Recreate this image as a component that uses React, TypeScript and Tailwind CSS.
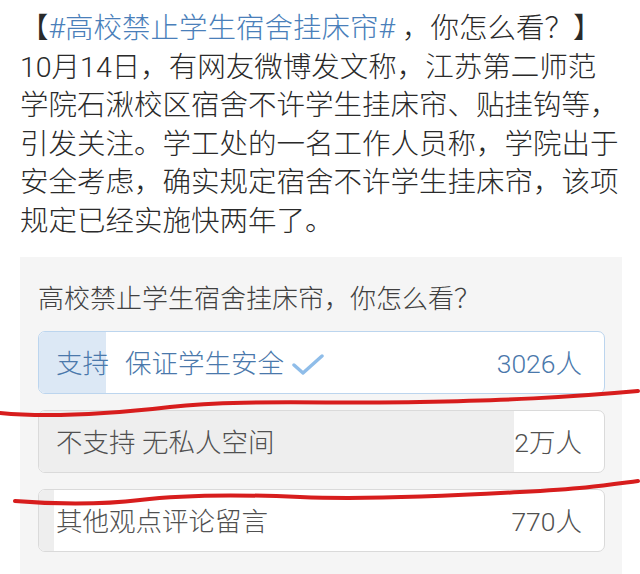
import React from "react";

type Option = {
  label: React.ReactNode;
  count: string;
  fill: number; // px width of the filled part
  selected?: boolean;
};

const options: Option[] = [
  {
    label: (
      <>
        <span>支持</span>
        <span className="ml-[16px]">保证学生安全</span>
        <svg width="32" height="22" viewBox="0 0 32 22" className="ml-[8px] mt-[2px]">
          <path d="M2 11 L11 19 L30 2" fill="none" stroke="#8fbde9" strokeWidth="3.4" strokeLinecap="round" strokeLinejoin="round" />
        </svg>
      </>
    ),
    count: "3026人",
    fill: 67,
    selected: true,
  },
  { label: "不支持 无私人空间", count: "2万人", fill: 475 },
  { label: "其他观点评论留言", count: "770人", fill: 15 },
];

function PollRow({ option }: { option: Option }) {
  const selected = option.selected;
  return (
    <div
      className={`relative h-[63px] rounded-[7px] border bg-white overflow-hidden ${
        selected ? "border-[#bcd5ee]" : "border-[#dadada]"
      }`}
    >
      {/* filled share of votes */}
      <div
        className={`absolute left-0 top-0 bottom-0 ${selected ? "bg-[#dce8f5]" : "bg-[#eeeeee]"}`}
        style={{ width: option.fill }}
      />
      <div
        className={`relative flex h-full items-center justify-between pl-[17px] pr-[22px] pt-[3px] text-[26.5px] ${
          selected ? "text-[#4a78ab]" : "text-[#505050]"
        }`}
      >
        <div className="flex items-center whitespace-nowrap">{option.label}</div>
        <div className="whitespace-nowrap">{option.count}</div>
      </div>
    </div>
  );
}

export default function App() {
  const lines = [
    "10月14日，有网友微博发文称，江苏第二师范",
    "学院石湫校区宿舍不许学生挂床帘、贴挂钩等，",
    "引发关注。学工处的一名工作人员称，学院出于",
    "安全考虑，确实规定宿舍不许学生挂床帘，该项",
    "规定已经实施快两年了。",
  ];

  return (
    <div className="relative w-[640px] h-[574px] overflow-hidden bg-white font-light font-['Roboto','Noto_Sans_CJK_SC',sans-serif]">
      {/* Post body */}
      <div className="px-[20px] pt-[10px] text-[28.5px] leading-[38.6px] text-[#2a2a2a]">
        <div className="whitespace-nowrap">
          【<span className="text-[#4a7fba]">#高校禁止学生宿舍挂床帘#</span> ，你怎么看？】
        </div>
        {lines.map((line) => (
          <div key={line} className="whitespace-nowrap">
            {line}
          </div>
        ))}
      </div>

      {/* Poll card */}
      <div className="mx-[20px] mt-[15px] w-[602px] h-[320px] bg-[#f5f5f5] pl-[18px] pr-[17px] pt-[24px]">
        <div className="text-[26px] leading-[36px] text-[#404040] whitespace-nowrap">
          高校禁止学生宿舍挂床帘，你怎么看？
        </div>
        <div className="mt-[14px] flex flex-col gap-[16px]">
          {options.map((o, i) => (
            <PollRow key={i} option={o} />
          ))}
        </div>
      </div>

      {/* Red hand-drawn annotations */}
      <svg className="absolute inset-0 pointer-events-none" width="640" height="574">
        <path
          d="M0 413 C 40 417, 100 415, 170 407 S 330 404, 420 402 S 560 398, 638 391"
          fill="none"
          stroke="#d71d1d"
          strokeWidth="4"
          strokeLinecap="round"
        />
        <path
          d="M15 501 C 50 504, 100 505, 140 500 S 230 494, 300 497 S 450 496, 520 492 S 600 486, 638 481"
          fill="none"
          stroke="#d71d1d"
          strokeWidth="4"
          strokeLinecap="round"
        />
      </svg>
    </div>
  );
}
